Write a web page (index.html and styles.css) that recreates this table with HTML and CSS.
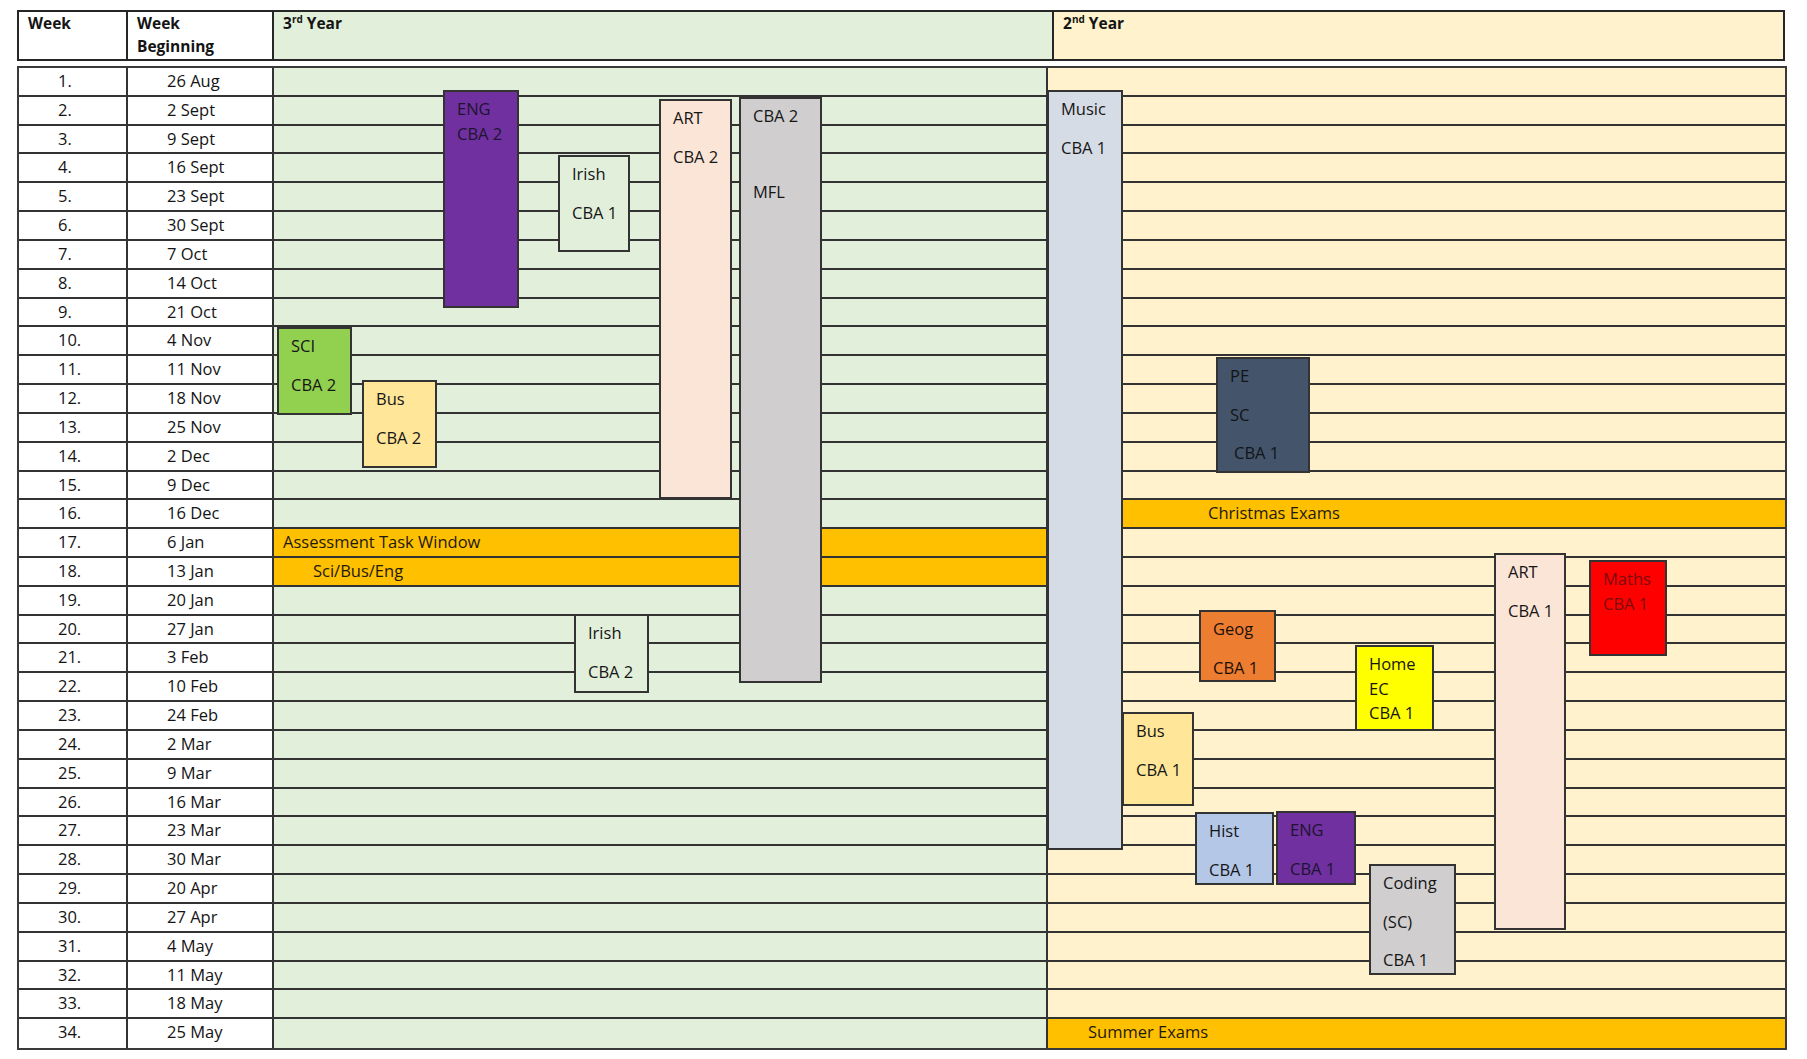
FILE: index.html
```html
<!DOCTYPE html>
<html lang="en">
<head>
<meta charset="utf-8">
<title>CBA Calendar</title>
<link rel="stylesheet" href="styles.css">
</head>
<body>
<div class="page">
  <div class="head">
    <div class="hc">Week</div>
    <div class="hc">Week<br>Beginning</div>
    <div class="hc y3">3<sup>rd</sup> Year</div>
    <div class="hc y2">2<sup>nd</sup> Year</div>
  </div>
  <div class="tbl">
    <div class="row"><div class="c wk">1.</div><div class="c dt">26 Aug</div><div class="c y3"></div><div class="c y2"></div></div>
    <div class="row"><div class="c wk">2.</div><div class="c dt">2 Sept</div><div class="c y3"></div><div class="c y2"></div></div>
    <div class="row"><div class="c wk">3.</div><div class="c dt">9 Sept</div><div class="c y3"></div><div class="c y2"></div></div>
    <div class="row"><div class="c wk">4.</div><div class="c dt">16 Sept</div><div class="c y3"></div><div class="c y2"></div></div>
    <div class="row"><div class="c wk">5.</div><div class="c dt">23 Sept</div><div class="c y3"></div><div class="c y2"></div></div>
    <div class="row"><div class="c wk">6.</div><div class="c dt">30 Sept</div><div class="c y3"></div><div class="c y2"></div></div>
    <div class="row"><div class="c wk">7.</div><div class="c dt">7 Oct</div><div class="c y3"></div><div class="c y2"></div></div>
    <div class="row"><div class="c wk">8.</div><div class="c dt">14 Oct</div><div class="c y3"></div><div class="c y2"></div></div>
    <div class="row"><div class="c wk">9.</div><div class="c dt">21 Oct</div><div class="c y3"></div><div class="c y2"></div></div>
    <div class="row"><div class="c wk">10.</div><div class="c dt">4 Nov</div><div class="c y3"></div><div class="c y2"></div></div>
    <div class="row"><div class="c wk">11.</div><div class="c dt">11 Nov</div><div class="c y3"></div><div class="c y2"></div></div>
    <div class="row"><div class="c wk">12.</div><div class="c dt">18 Nov</div><div class="c y3"></div><div class="c y2"></div></div>
    <div class="row"><div class="c wk">13.</div><div class="c dt">25 Nov</div><div class="c y3"></div><div class="c y2"></div></div>
    <div class="row"><div class="c wk">14.</div><div class="c dt">2 Dec</div><div class="c y3"></div><div class="c y2"></div></div>
    <div class="row"><div class="c wk">15.</div><div class="c dt">9 Dec</div><div class="c y3"></div><div class="c y2"></div></div>
    <div class="row"><div class="c wk">16.</div><div class="c dt">16 Dec</div><div class="c y3"></div><div class="c y2 band xmas">Christmas Exams</div></div>
    <div class="row"><div class="c wk">17.</div><div class="c dt">6 Jan</div><div class="c y3 band atw">Assessment Task Window</div><div class="c y2"></div></div>
    <div class="row"><div class="c wk">18.</div><div class="c dt">13 Jan</div><div class="c y3 band sbe">Sci/Bus/Eng</div><div class="c y2"></div></div>
    <div class="row"><div class="c wk">19.</div><div class="c dt">20 Jan</div><div class="c y3"></div><div class="c y2"></div></div>
    <div class="row"><div class="c wk">20.</div><div class="c dt">27 Jan</div><div class="c y3"></div><div class="c y2"></div></div>
    <div class="row"><div class="c wk">21.</div><div class="c dt">3 Feb</div><div class="c y3"></div><div class="c y2"></div></div>
    <div class="row"><div class="c wk">22.</div><div class="c dt">10 Feb</div><div class="c y3"></div><div class="c y2"></div></div>
    <div class="row"><div class="c wk">23.</div><div class="c dt">24 Feb</div><div class="c y3"></div><div class="c y2"></div></div>
    <div class="row"><div class="c wk">24.</div><div class="c dt">2 Mar</div><div class="c y3"></div><div class="c y2"></div></div>
    <div class="row"><div class="c wk">25.</div><div class="c dt">9 Mar</div><div class="c y3"></div><div class="c y2"></div></div>
    <div class="row"><div class="c wk">26.</div><div class="c dt">16 Mar</div><div class="c y3"></div><div class="c y2"></div></div>
    <div class="row"><div class="c wk">27.</div><div class="c dt">23 Mar</div><div class="c y3"></div><div class="c y2"></div></div>
    <div class="row"><div class="c wk">28.</div><div class="c dt">30 Mar</div><div class="c y3"></div><div class="c y2"></div></div>
    <div class="row"><div class="c wk">29.</div><div class="c dt">20 Apr</div><div class="c y3"></div><div class="c y2"></div></div>
    <div class="row"><div class="c wk">30.</div><div class="c dt">27 Apr</div><div class="c y3"></div><div class="c y2"></div></div>
    <div class="row"><div class="c wk">31.</div><div class="c dt">4 May</div><div class="c y3"></div><div class="c y2"></div></div>
    <div class="row"><div class="c wk">32.</div><div class="c dt">11 May</div><div class="c y3"></div><div class="c y2"></div></div>
    <div class="row"><div class="c wk">33.</div><div class="c dt">18 May</div><div class="c y3"></div><div class="c y2"></div></div>
    <div class="row"><div class="c wk">34.</div><div class="c dt">25 May</div><div class="c y3"></div><div class="c y2 band summer">Summer Exams</div></div>
  </div>

  <!-- 3rd year CBA blocks -->
  <div class="box eng2 tight"><span>ENG</span><span>CBA 2</span></div>
  <div class="box irish1"><span>Irish</span><span>CBA 1</span></div>
  <div class="box art2"><span>ART</span><span>CBA 2</span></div>
  <div class="box mfl"><span>CBA 2</span><span>&nbsp;</span><span>MFL</span></div>
  <div class="box sci"><span>SCI</span><span>CBA 2</span></div>
  <div class="box bus2"><span>Bus</span><span>CBA 2</span></div>
  <div class="box irish2"><span>Irish</span><span>CBA 2</span></div>

  <!-- 2nd year CBA blocks -->
  <div class="box music"><span>Music</span><span>CBA 1</span></div>
  <div class="box pe"><span>PE</span><span>SC</span><span class="ind">CBA 1</span></div>
  <div class="box geog"><span>Geog</span><span>CBA 1</span></div>
  <div class="box home tight"><span>Home</span><span>EC</span><span>CBA 1</span></div>
  <div class="box art1"><span>ART</span><span>CBA 1</span></div>
  <div class="box maths tight"><span>Maths</span><span>CBA 1</span></div>
  <div class="box bus1"><span>Bus</span><span>CBA 1</span></div>
  <div class="box hist"><span>Hist</span><span>CBA 1</span></div>
  <div class="box eng1"><span>ENG</span><span>CBA 1</span></div>
  <div class="box coding"><span>Coding</span><span>(SC)</span><span>CBA 1</span></div>
</div>
</body>
</html>
```

FILE: styles.css
```css
* { box-sizing: border-box; }

html, body {
  margin: 0;
  padding: 0;
  background: #ffffff;
}

body {
  font-family: "Open Sans", "Liberation Sans", sans-serif;
  font-size: 16.5px;
  color: #141414;
}

.page {
  position: relative;
  width: 1807px;
  height: 1059px;
  padding: 10px 0 0 17px;
}

/* ---------- header table ---------- */
.head {
  display: grid;
  grid-template-columns: 109px 146px 780px 1fr;
  width: 1768px;
  height: 51px;
  border: 2px solid #262626;
}

.hc {
  font-weight: 700;
  font-size: 15.5px;
  line-height: 23px;
  padding: 0 0 0 9px;
  border-right: 2px solid #262626;
}

.hc:last-child { border-right: 0; }

.hc sup {
  font-size: 10px;
  line-height: 0;
  vertical-align: 6px;
}

.hc.y3 { background: #e2efda; }
.hc.y2 { background: #fff2cc; }

/* ---------- body table ---------- */
.tbl {
  display: grid;
  grid-template-rows: repeat(34, 1fr);
  width: 1770px;
  height: 984px;
  margin-top: 5px;
  border: 2px solid #3a3a3a;
}

.row {
  display: grid;
  grid-template-columns: 109px 146px 774px 1fr;
  border-bottom: 2px solid #333;
}

.row:last-child { border-bottom: 0; }

.c {
  border-right: 2px solid #333;
  line-height: 25px;
  white-space: nowrap;
}

.c.y2 { border-right: 0; }

.c.wk { padding-left: 39px; }
.c.dt { padding-left: 39px; }

.c.y3 { background: #e2efda; }
.c.y2 { background: #fff2cc; }

.c.band { background: #ffc000; color: #1e1a10; }
.band.atw { padding-left: 9px; }
.band.sbe { padding-left: 39px; }
.band.xmas { padding-left: 160px; }
.band.summer { padding-left: 40px; }

/* ---------- CBA blocks (placed on the calendar by week) ---------- */
.box {
  position: absolute;
  display: flex;
  flex-direction: column;
  gap: 16.5px;
  padding: 6px 0 0 12px;
  border: 2px solid #333;
  line-height: 22px;
  white-space: nowrap;
  color: #161616;
}

.box.tight { gap: 2.5px; }

.box .ind { padding-left: 4px; }

.eng2   { left: 443px;  top: 90px;  width: 76px; height: 218px; background: #7030a0; color: #1d1430; }
.irish1 { left: 558px;  top: 155px; width: 72px; height: 97px;  background: #e2efda; }
.art2   { left: 659px;  top: 99px;  width: 73px; height: 400px; background: #fbe5d6; }
.mfl    { left: 739px;  top: 97px;  width: 83px; height: 586px; background: #d0cece; gap: 16px; }
.sci    { left: 277px;  top: 327px; width: 75px; height: 88px;  background: #92d050; }
.bus2   { left: 362px;  top: 380px; width: 75px; height: 88px;  background: #ffe699; }
.irish2 { left: 574px;  top: 614px; width: 75px; height: 79px;  background: #e2efda; }

.music  { left: 1047px; top: 90px;  width: 76px; height: 760px; background: #d6dce5; }
.pe     { left: 1216px; top: 357px; width: 94px; height: 116px; background: #44546a; color: #111418; }
.geog   { left: 1199px; top: 610px; width: 77px; height: 72px;  background: #ed7d31; color: #1c1008; }
.home   { left: 1355px; top: 645px; width: 79px; height: 86px;  background: #ffff00; }
.art1   { left: 1494px; top: 553px; width: 72px; height: 377px; background: #fbe5d6; }
.maths  { left: 1589px; top: 560px; width: 78px; height: 96px;  background: #ff0000; color: #7a0c0c; }
.bus1   { left: 1122px; top: 712px; width: 72px; height: 94px;  background: #ffe699; }
.hist   { left: 1195px; top: 812px; width: 79px; height: 73px;  background: #b4c7e7; }
.eng1   { left: 1276px; top: 811px; width: 80px; height: 74px;  background: #7030a0; color: #1d1430; }
.coding { left: 1369px; top: 864px; width: 87px; height: 111px; background: #d0cece; }
```
